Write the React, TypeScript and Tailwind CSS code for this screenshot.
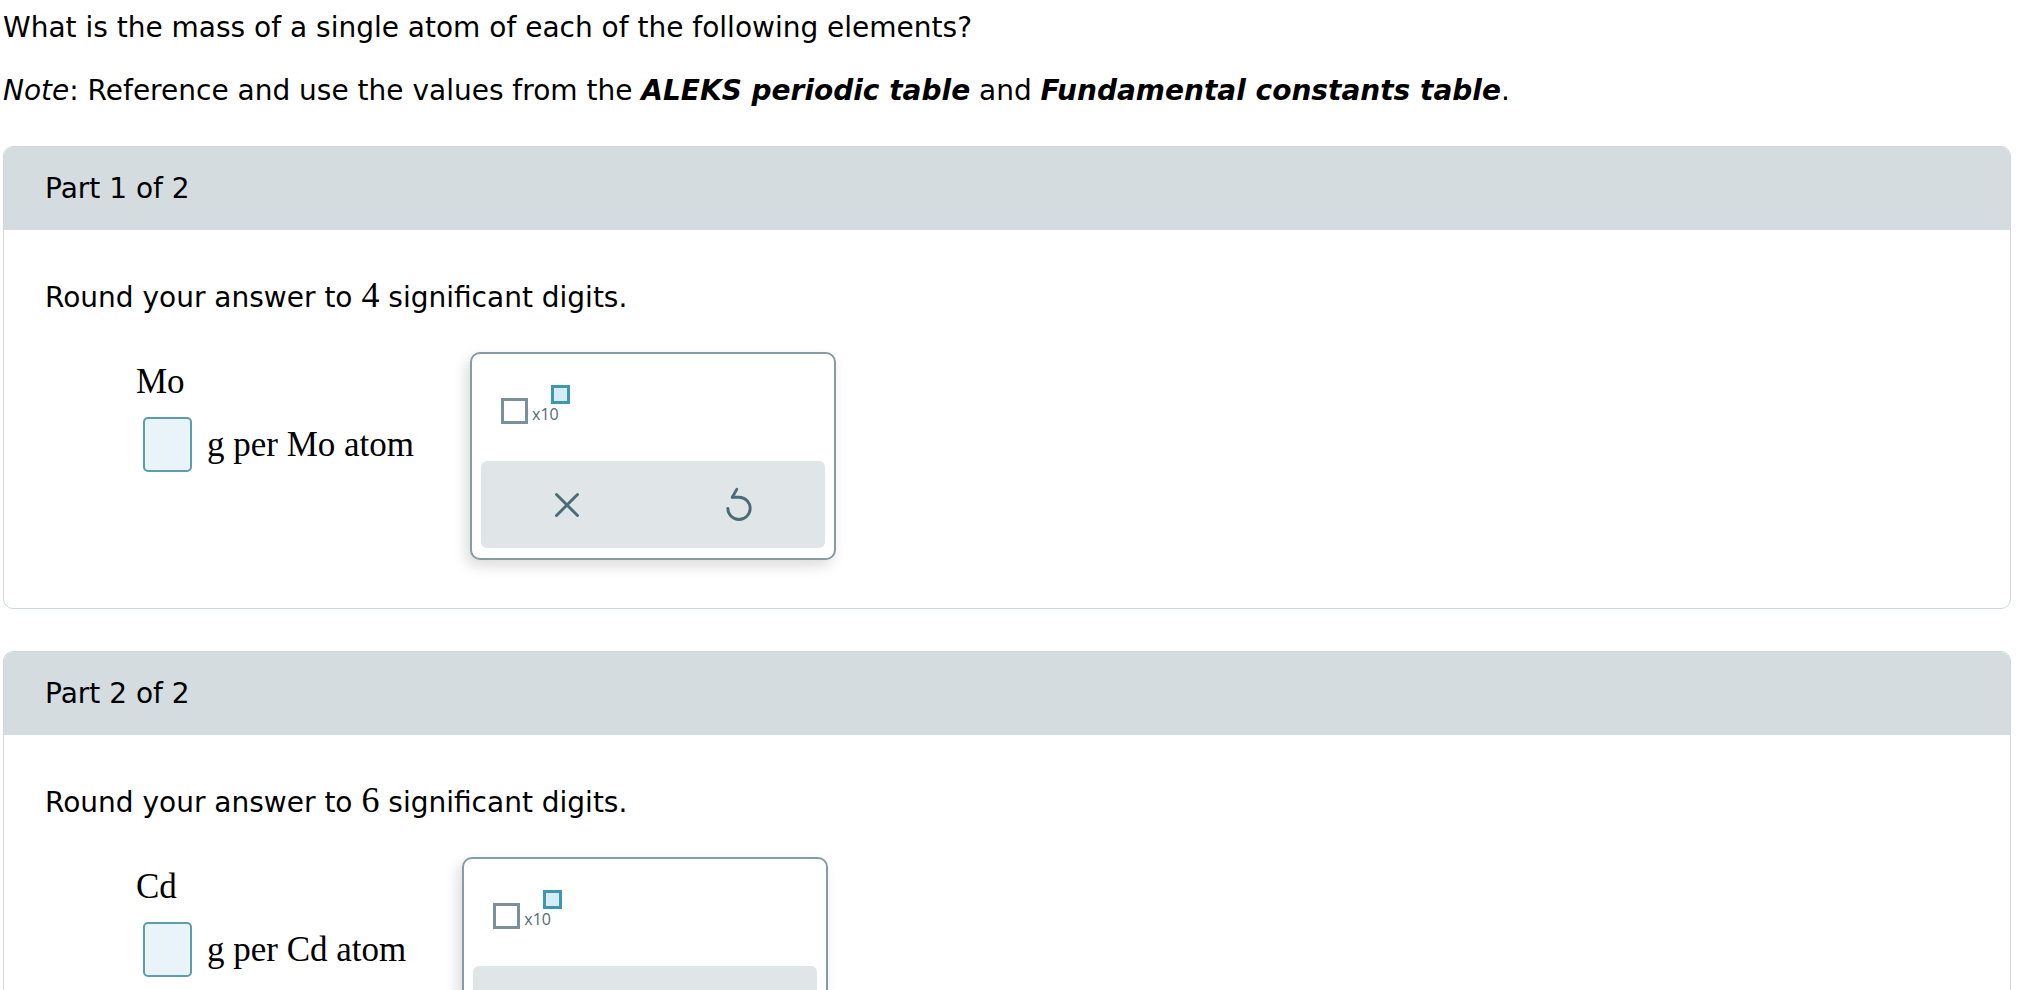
const sans = "font-['DejaVu_Sans',Verdana,sans-serif]";
const serif = "font-['Liberation_Serif','Times_New_Roman',serif]";

const CloseIcon = () => (
  <svg width="28" height="28" viewBox="0 0 24 24" fill="none" stroke="#4b6b78" strokeWidth="2.5" strokeLinecap="round">
    <path d="M3 3 L21 21 M21 3 L3 21" />
  </svg>
);

const UndoIcon = () => (
  <svg width="32" height="38" viewBox="0 0 28 34" fill="none" stroke="#4b6b78" strokeWidth="2.6" strokeLinecap="round" strokeLinejoin="round">
    <path d="M8 10 L14 10 A10 10 0 1 1 4 20" />
    <path d="M8 10 L12 3" />
  </svg>
);

const Palette = () => (
  <div className="ml-[56px] w-[366px] h-[208px] rounded-[10px] border-2 border-[#869ba4] bg-white pt-[9px] px-[9px] pb-[10px] shadow-[-4px_6px_14px_rgba(0,0,0,0.14)] flex flex-col">
    <div className="h-[98px] shrink-0 pl-[20px] pt-[22px] flex items-start">
      <div className="mt-[13px] w-[27px] h-[26px] border-[3px] border-[#7b9099]" />
      <span className="mt-[21px] ml-[4px] text-[16px] leading-[16px] font-medium text-[#4f6a76] font-['Open_Sans',sans-serif]">x10</span>
      <div className="-ml-[8px] w-[19px] h-[19px] border-[3px] border-[#3d97ae] bg-[#d4ecf3]" />
    </div>
    <div className="flex-1 rounded-[6px] bg-[#e0e5e8] grid grid-cols-2">
      <div className="flex items-center justify-center">
        <CloseIcon />
      </div>
      <div className="flex items-center justify-center">
        <UndoIcon />
      </div>
    </div>
  </div>
);

const Part = ({ n, digits, el }: { n: number; digits: number; el: string }) => (
  <div className="ml-[3px] w-[2008px] rounded-[10px] border border-[#cfd7db] overflow-hidden">
    <div className="h-[83px] bg-[#d4dce0] px-[41px] flex items-center">
      <span className="text-[28px] leading-[36px]">Part {n} of 2</span>
    </div>
    <div className="pt-[47px] pb-[48px] pl-[41px]">
      <p className="text-[28px] leading-[36px]">
        Round your answer to <span className="font-['Liberation_Serif','Times_New_Roman',serif] text-[36px]">{digits}</span> significant digits.
      </p>
      <div className="mt-[36px] ml-[91px] flex items-start">
        <div className={`${serif} text-[35px] leading-[40px] text-black`}>
          <div className="mt-[10px]">{el}</div>
          <div className="mt-[15px] flex items-center">
            <div className="ml-[7px] w-[49px] h-[55px] rounded-[5px] border-2 border-[#5c9cac] bg-[#e9f4f8]" />
            <span className="ml-[15px]">g per {el} atom</span>
          </div>
        </div>
        <Palette />
      </div>
    </div>
  </div>
);

export default function App() {
  return (
    <div className={`${sans} min-h-screen bg-white text-black`}>
      <p className="pt-[10px] pl-[3px] text-[28px] leading-[36px]">
        What is the mass of a single atom of each of the following elements?
      </p>
      <p className="mt-[27px] pl-[3px] text-[28px] leading-[36px]">
        <i>Note</i>: Reference and use the values from the <b><i>ALEKS periodic table</i></b> and{" "}
        <b><i>Fundamental constants table</i></b>.
      </p>
      <div className="mt-[37px] flex flex-col gap-[42px] pb-[40px]">
        <Part n={1} digits={4} el="Mo" />
        <Part n={2} digits={6} el="Cd" />
      </div>
    </div>
  );
}
